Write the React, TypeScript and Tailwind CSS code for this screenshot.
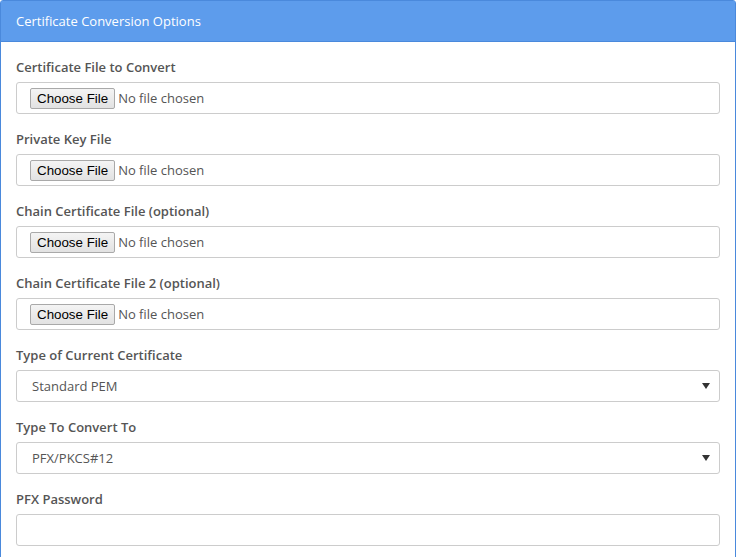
interface FileFieldProps {
  label: string;
}

function FileField({ label }: FileFieldProps) {
  return (
    <div className="mb-[15px]">
      <label className="block text-[13px] leading-[20px] font-semibold text-[#555] mb-[5px]">
        {label}
      </label>
      <div className="h-[32px] border border-[#ccc] rounded-[3px] flex items-center pl-[13px] pt-[1px] bg-white">
        <span
          className="h-[21px] px-[6px] flex items-center border border-[#a9a9a9] rounded-[2px] bg-gradient-to-b from-[#f4f4f4] to-[#e2e2e2] text-[13.33px] text-black"
          style={{ fontFamily: "'Liberation Sans', Arial, sans-serif" }}
        >
          Choose File
        </span>
        <span className="ml-[3px] text-[13px] text-[#555]">No file chosen</span>
      </div>
    </div>
  );
}

interface SelectFieldProps {
  label: string;
  value: string;
}

function SelectField({ label, value }: SelectFieldProps) {
  return (
    <div className="mb-[15px]">
      <label className="block text-[13px] leading-[20px] font-semibold text-[#555] mb-[5px]">
        {label}
      </label>
      <div className="h-[32px] border border-[#ccc] rounded-[3px] flex items-center justify-between pl-[15px] pr-[9px] pt-[2px] bg-white">
        <span className="text-[13px] text-[#555]">{value}</span>
        <svg width="8" height="6" viewBox="0 0 8 6" className="-mt-[2px]">
          <path d="M0 0 H8 L4 6 Z" fill="#333" />
        </svg>
      </div>
    </div>
  );
}

export default function App() {
  return (
    <div
      className="w-[736px] h-[557px] bg-white overflow-hidden"
      style={{ fontFamily: "'Open Sans', sans-serif" }}
    >
      <div className="border border-[#4a89dc] rounded-t-[3px] bg-white h-[600px]">
        {/* Heading */}
        <div className="h-[41px] bg-[#5d9cec] border-b border-[#4a89dc] px-[15px] pt-[1px] flex items-center text-white text-[13px]">
          Certificate Conversion Options
        </div>

        {/* Body */}
        <div className="px-[15px] pt-[15px]">
          <FileField label="Certificate File to Convert" />
          <FileField label="Private Key File" />
          <FileField label="Chain Certificate File (optional)" />
          <FileField label="Chain Certificate File 2 (optional)" />
          <SelectField label="Type of Current Certificate" value="Standard PEM" />
          <SelectField label="Type To Convert To" value="PFX/PKCS#12" />

          <div className="mb-[15px]">
            <label className="block text-[13px] leading-[20px] font-semibold text-[#555] mb-[5px]">
              PFX Password
            </label>
            <div className="h-[32px] border border-[#ccc] rounded-[3px] bg-white" />
          </div>
        </div>
      </div>
    </div>
  );
}
